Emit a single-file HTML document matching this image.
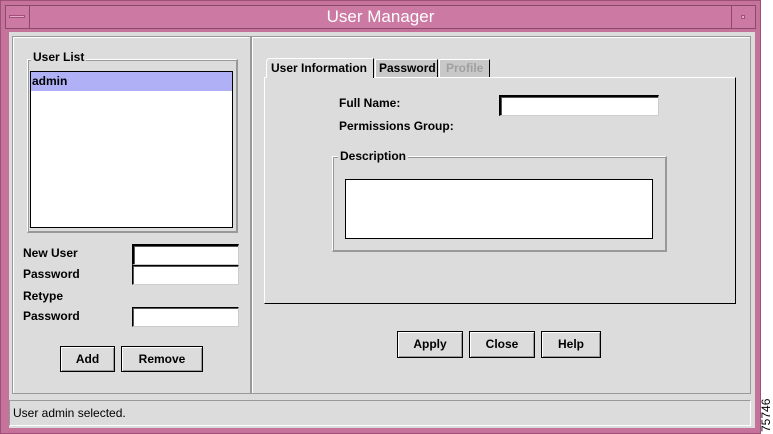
<!DOCTYPE html>
<html><head><style>
*{margin:0;padding:0;box-sizing:border-box}
body{width:773px;height:434px;background:#fff;position:relative;overflow:hidden;font-family:"Liberation Sans",sans-serif;font-size:12px;color:#000}
.a{position:absolute}
.b{font-weight:bold}
.field{position:absolute;background:#fff;border:1px solid #000;border-right-color:#ccc;border-bottom-color:#ccc;box-shadow:inset 1px 1px 0 #555}
.btn{position:absolute;background:#dcdcdc;border:1px solid #000;box-shadow:inset 1px 1px 0 #fff,inset -1px -1px 0 #999;font-weight:bold;text-align:center}
.grp{position:absolute;border:1px solid #fff;border-right:2px solid #999;border-bottom:2px solid #999;box-shadow:inset 1px 1px 0 #999}
.gt{position:absolute;background:#dcdcdc;font-weight:bold;padding:0 2px}
</style></head><body>
<div class="a" style="left:0;top:0;width:761px;height:434px;background:#c6739c;border:1px solid #a05078"></div>
<div class="a" style="left:5px;top:5px;width:751px;height:24px;background:#cc7aa3;border:1px solid #8a4a6a"></div>
<div class="a" style="left:5px;top:5px;width:25px;height:24px;border-right:1px solid #8a4a6a"></div>
<div class="a" style="left:9px;top:15px;width:16px;height:3px;background:#e8a8c8;border:1px solid #a05078"></div>
<div class="a" style="left:731px;top:5px;width:25px;height:24px;border-left:1px solid #8a4a6a"></div>
<div class="a" style="left:741px;top:15px;width:4px;height:4px;background:#e8a8c8;border:1px solid #a05078"></div>
<div class="a" style="left:30px;top:6px;width:701px;text-align:center;color:#fff;font-size:17px;line-height:22px">User Manager</div>
<div class="a" style="left:9px;top:32px;width:746px;height:396px;background:#dcdcdc"></div>
<!-- left panel -->
<div class="a" style="left:12px;top:36px;width:239px;height:358px;border:1px solid #999;box-shadow:inset 1px 1px 0 #fff"></div>
<div class="a" style="left:251px;top:36px;width:500px;height:358px;border:1px solid #999;box-shadow:inset 1px 1px 0 #fff"></div>
<div class="grp" style="left:27px;top:59px;width:211px;height:174px"></div>
<div class="gt" style="left:31px;top:50px">User List</div>
<div class="field" style="left:30px;top:71px;width:203px;height:157px;border-color:#000;box-shadow:none"></div>
<div class="a b" style="left:31px;top:72px;width:201px;height:19px;background:#b0b0f6;line-height:18px;padding-left:1px">admin</div>
<div class="a b" style="left:23px;top:246px">New User</div>
<div class="a b" style="left:23px;top:267px">Password</div>
<div class="a b" style="left:23px;top:289px">Retype</div>
<div class="a b" style="left:23px;top:309px">Password</div>
<div class="field" style="left:132px;top:244px;width:107px;height:21px;border-width:2px 1px 1px 2px;border-color:#000 #ccc #ccc #000"></div>
<div class="field" style="left:132px;top:265px;width:107px;height:20px"></div>
<div class="field" style="left:132px;top:307px;width:107px;height:20px"></div>
<div class="btn" style="left:60px;top:346px;width:55px;height:26px;line-height:24px">Add</div>
<div class="btn" style="left:121px;top:346px;width:82px;height:26px;line-height:24px">Remove</div>
<!-- right -->
<div class="a" style="left:264px;top:77px;width:472px;height:227px;border:1px solid #fff;border-right:1px solid #000;border-bottom:1px solid #000"></div>
<div class="a b" style="left:266px;top:58px;width:108px;height:20px;background:#dcdcdc;border:1px solid #fff;border-bottom:none;border-right:1px solid #000;border-radius:4px 0 0 0;line-height:18px;padding-left:4px">User Information</div>
<div class="a b" style="left:375px;top:59px;width:63px;height:18px;background:#c8c8c8;border:1px solid #fff;border-right:1px solid #000;border-bottom:none;line-height:16px;padding-left:3px">Password</div>
<div class="a b" style="left:439px;top:59px;width:51px;height:18px;background:#c8c8c8;border:1px solid #fff;border-right:1px solid #000;border-bottom:none;line-height:16px;padding-left:6px;color:#a0a0a0">Profile</div>
<div class="a b" style="left:339px;top:96px">Full Name:</div>
<div class="a b" style="left:339px;top:119px">Permissions Group:</div>
<div class="field" style="left:499px;top:95px;width:160px;height:21px;border-width:2px 1px 1px 2px;border-color:#000 #ccc #ccc #000"></div>
<div class="grp" style="left:332px;top:156px;width:335px;height:96px"></div>
<div class="gt" style="left:338px;top:149px">Description</div>
<div class="field" style="left:345px;top:179px;width:308px;height:60px;border-color:#000;box-shadow:none"></div>
<div class="btn" style="left:397px;top:331px;width:66px;height:27px;line-height:25px">Apply</div>
<div class="btn" style="left:469px;top:331px;width:66px;height:27px;line-height:25px">Close</div>
<div class="btn" style="left:541px;top:331px;width:60px;height:27px;line-height:25px">Help</div>
<!-- status -->
<div class="a" style="left:9px;top:400px;width:742px;height:26px;border:1px solid #999;border-right-color:#fff;border-bottom-color:#fff;line-height:24px;padding-left:3px">User admin selected.</div>
<div class="a" style="left:758px;top:410px;transform:rotate(-90deg);transform-origin:0 0;font-size:12px;width:40px;top:432px;left:759px">75746</div>
</body></html>
